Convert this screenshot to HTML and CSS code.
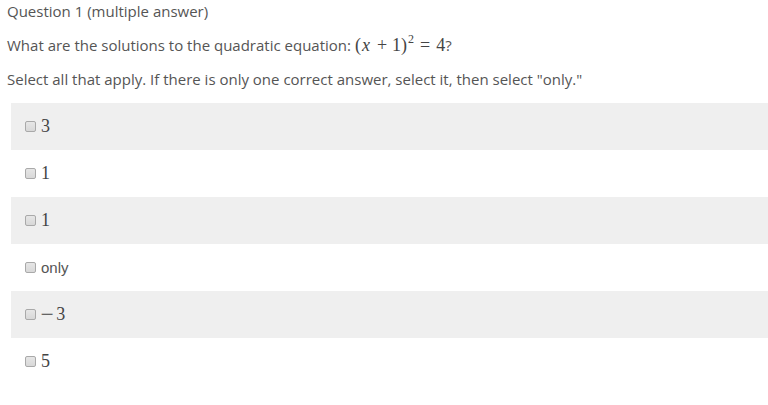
FILE: index.html
```html
<!DOCTYPE html>
<html>
<head>
<meta charset="utf-8">
<link rel="stylesheet" href="styles.css">
</head>
<body>
<div class="question">
  <p class="title">Question 1 (multiple answer)</p>
  <p class="prompt">What are the solutions to the quadratic equation: <span class="math">(<i class="mi">x</i><span class="mo">+</span>1)<sup class="msup">2</sup><span class="mrel">=</span>4</span>?</p>
  <p class="prompt">Select all that apply. If there is only one correct answer, select it, then select "only."</p>
  <ul class="answers">
    <li class="answer"><input type="checkbox" class="box"><span class="math">3</span></li>
    <li class="answer"><input type="checkbox" class="box"><span class="math">1</span></li>
    <li class="answer"><input type="checkbox" class="box"><span class="math">1</span></li>
    <li class="answer"><input type="checkbox" class="box"><span class="plain">only</span></li>
    <li class="answer"><input type="checkbox" class="box"><span class="math"><span class="neg">&minus;</span>3</span></li>
    <li class="answer"><input type="checkbox" class="box"><span class="math">5</span></li>
  </ul>
</div>
</body>
</html>
```
FILE: styles.css
```css
html, body {
  margin: 0;
  padding: 0;
  background: #fff;
}
body {
  font-family: "Open Sans", "DejaVu Sans", sans-serif;
  font-size: 15px;
  color: #555;
}
.question {
  padding: 1px 0 0 7px;
}
p {
  margin: 0 0 13px 0;
  line-height: 21px;
}
.math {
  font-family: "Liberation Serif", "DejaVu Serif", serif;
  font-size: 18px;
  color: #444;
  white-space: nowrap;
}
.mi {
  font-style: italic;
  padding: 0 2px 0 1px;
}
.mo {
  margin: 0 5px;
}
.mrel {
  margin: 0 6px;
}
.msup {
  font-size: 12px;
  line-height: 0;
  vertical-align: 8px;
  margin-left: 1px;
}
.answers {
  list-style: none;
  margin: 0 0 0 4px;
  padding: 0;
}
.answer {
  height: 47px;
  display: flex;
  align-items: center;
  padding-left: 14px;
}
.answer:nth-child(odd) {
  background: #efefef;
}
.box {
  -webkit-appearance: none;
  appearance: none;
  box-sizing: border-box;
  width: 11px;
  height: 11px;
  margin: 0 5px 0 0;
  border: 1px solid #a9a9a9;
  border-radius: 2px;
  background: linear-gradient(#e6e6e6, #d8d8d8);
}
.neg {
  display: inline-block;
  transform: scaleX(1.3);
  margin: 0 4px 0 1px;
}
.plain {
  font-family: "Liberation Sans", Arial, sans-serif;
  font-size: 15px;
  color: #555;
}
```
